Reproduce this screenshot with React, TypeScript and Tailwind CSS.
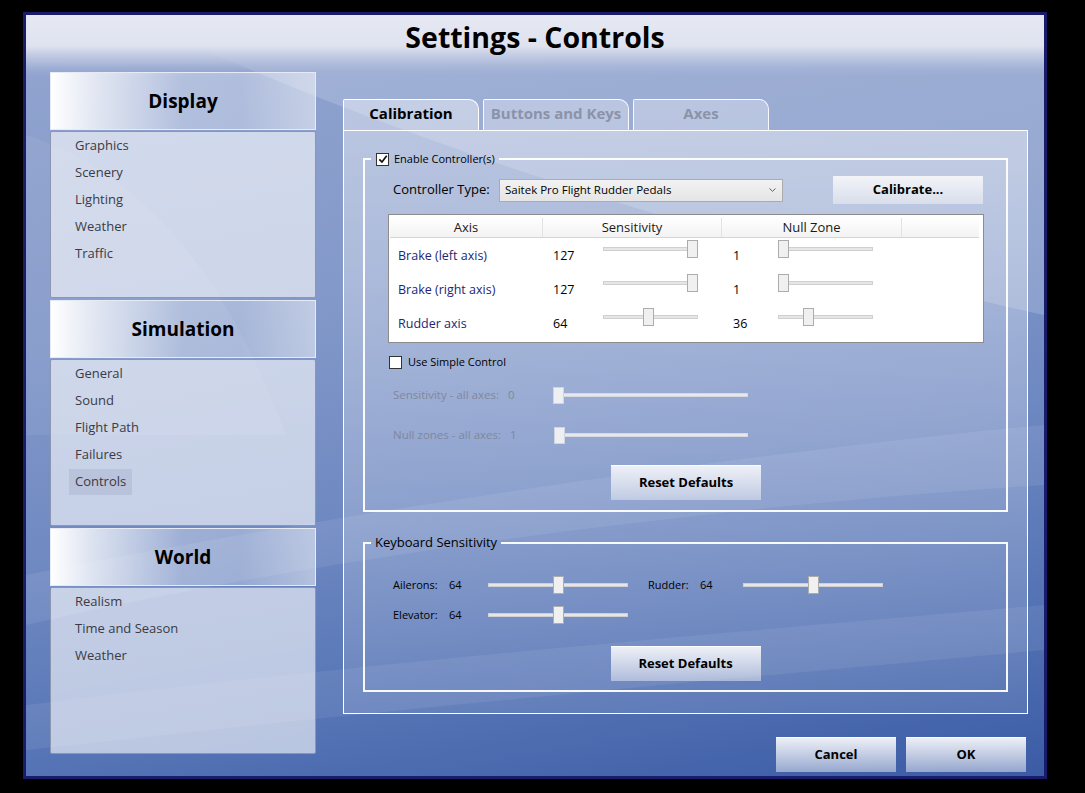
import React from "react";

type SliderProps = { w: string; h?: string; frac: number; disabled?: boolean };

function Slider({ w, h = "h-[18px]", frac, disabled }: SliderProps) {
  return (
    <div className={`relative shrink-0 ${w} ${h}`}>
      <div
        className={`absolute left-0 right-0 top-1/2 -translate-y-1/2 h-[4px] border ${
          disabled ? "bg-[#e6e8ec] border-[#d6d9e0]" : "bg-[#e6e6e6] border-[#d0d0d0]"
        }`}
      />
      <div
        className={`absolute top-0 bottom-0 w-[11px] border ${
          disabled ? "bg-[#eeeff2] border-[#d2d5dc]" : "bg-[#f0f0f0] border-[#acacac]"
        }`}
        style={{ left: `calc(${frac} * (100% - 11px))` }}
      />
    </div>
  );
}

function Section({ title, items, active }: { title: string; items: string[]; active?: string }) {
  return (
    <div className="flex flex-col">
      <div className="h-[58px] flex items-center justify-center border border-[#e6eaf4] bg-[linear-gradient(90deg,rgba(255,255,255,1)_0%,rgba(255,255,255,0.75)_16%,rgba(255,255,255,0.32)_50%,rgba(255,255,255,0.3)_72%,rgba(255,255,255,0.5)_100%)] text-[19px] font-bold text-black">
        {title}
      </div>
      <div className="mt-[1px] h-[167px] rounded-[2px] border border-[#8b96b3] bg-white/60">
        {items.map((it) => (
          <div key={it} className="h-[27px] flex items-center">
            <span
              className={`ml-[18px] px-[6px] h-[26px] flex items-center text-[13px] text-[#3a3a46] ${
                it === active ? "bg-[#aab4d0]/50" : ""
              }`}
            >
              {it}
            </span>
          </div>
        ))}
      </div>
    </div>
  );
}

function Btn({ label, w, h }: { label: string; w: string; h: string }) {
  return (
    <div
      className={`${w} ${h} flex items-center justify-center bg-gradient-to-b from-[#eff1f7] to-[#eceef5]/50 text-[13px] font-bold text-black shadow-[inset_0_1px_0_rgba(255,255,255,0.8)]`}
    >
      {label}
    </div>
  );
}

function CheckBox({ checked }: { checked?: boolean }) {
  return (
    <span className="w-[13px] h-[13px] border border-[#333333] bg-white flex items-center justify-center shrink-0">
      {checked && (
        <svg viewBox="0 0 10 10" className="w-[10px] h-[10px]">
          <path d="M1.3 5.3 L4 8 L8.7 1.8" stroke="#111" strokeWidth="1.7" fill="none" />
        </svg>
      )}
    </span>
  );
}

const rows = [
  { name: "Brake (left axis)", s: 127, sf: 1, n: 1, nf: 0 },
  { name: "Brake (right axis)", s: 127, sf: 1, n: 1, nf: 0 },
  { name: "Rudder axis", s: 64, sf: 0.48, n: 36, nf: 0.3 },
];

export default function App() {
  return (
    <div className="w-[1085px] h-[793px] bg-black pt-[12px] pl-[23px] font-['Open_Sans',sans-serif]">
      <div className="relative w-[1024px] h-[767px] border-[3px] border-[#1b1b6b] overflow-hidden bg-[linear-gradient(170deg,#93a5d0_0%,#8399c9_35%,#6e88c1_60%,#5372b4_82%,#3b5ba5_100%)]">
        <svg className="absolute inset-0 w-full h-full" viewBox="0 0 1018 761" preserveAspectRatio="none">
          <defs>
            <linearGradient id="top" x1="0" y1="0" x2="0" y2="1">
              <stop offset="0" stopColor="#e6e9f3" />
              <stop offset="0.5" stopColor="#dfe3ef" />
              <stop offset="0.75" stopColor="#b9c4df" stopOpacity="0.8" />
              <stop offset="1" stopColor="#9fb0d6" stopOpacity="0" />
            </linearGradient>
          </defs>
          <path d="M100 0 L1018 0 L1018 300 C 700 230 380 130 100 0 Z" fill="#ffffff" opacity="0.16" />
          <path d="M0 120 C 120 160 200 260 260 420 L 0 420 Z" fill="#ffffff" opacity="0.06" />
          <path d="M0 560 C 300 500 700 440 1018 410 L1018 470 C 700 490 300 540 0 610 Z" fill="#ffffff" opacity="0.08" />
          <path d="M0 690 C 400 640 800 610 1018 590 L1018 635 C 800 655 400 690 0 735 Z" fill="#ffffff" opacity="0.07" />
          <rect x="0" y="0" width="1018" height="62" fill="url(#top)" />
        </svg>

        <div className="relative flex flex-col h-full">
          <h1 className="h-[57px] text-center text-[28.5px] font-bold leading-[44px] text-black">
            Settings - Controls
          </h1>

          <div className="flex pl-[24px]">
            <aside className="w-[266px] flex flex-col gap-[2px]">
              <Section title="Display" items={["Graphics", "Scenery", "Lighting", "Weather", "Traffic"]} />
              <Section
                title="Simulation"
                items={["General", "Sound", "Flight Path", "Failures", "Controls"]}
                active="Controls"
              />
              <Section title="World" items={["Realism", "Time and Season", "Weather"]} />
            </aside>

            <main className="ml-[27px] w-[685px] pt-[27px] flex flex-col">
              <div className="flex gap-[4px] h-[31px] items-end">
                <div className="w-[136px] h-[31px] pb-[4px] border border-b-0 border-white rounded-tr-[10px] rounded-tl-[2px] bg-white/40 flex items-center justify-center text-[15px] font-bold text-black">
                  Calibration
                </div>
                <div className="w-[146px] h-[31px] pb-[4px] border border-b-0 border-white/90 rounded-tr-[10px] rounded-tl-[2px] bg-white/30 flex items-center justify-center text-[15px] font-bold text-[#8a93a9]">
                  Buttons and Keys
                </div>
                <div className="w-[136px] h-[31px] pb-[4px] border border-b-0 border-white/90 rounded-tr-[10px] rounded-tl-[2px] bg-white/30 flex items-center justify-center text-[15px] font-bold text-[#8a93a9]">
                  Axes
                </div>
              </div>

              <div className="h-[584px] border border-white bg-gradient-to-b from-white/40 to-white/10 px-[19px] pt-[20px]">
                <fieldset className="border-2 border-white/95">
                  <legend className="ml-[6px] px-[4px] h-[16px] flex items-center gap-[5px] text-[11px] text-black">
                    <span className="ml-[1px]">
                      <CheckBox checked />
                    </span>
                    Enable Controller(s)
                  </legend>
                  <div className="pl-[23px] pr-[22px] pt-[9px] pb-[10px] flex flex-col">
                    <div className="h-[28px] flex items-center justify-between">
                      <div className="flex items-center">
                        <span className="w-[111px] pl-[5px] text-[13px] text-black">Controller Type:</span>
                        <div className="w-[284px] h-[23px] border border-[#acacac] bg-gradient-to-b from-[#f2f2f2] to-[#e5e5e5] flex items-center justify-between pl-[5px] pr-[6px] text-[11.5px] text-black">
                          <span>Saitek Pro Flight Rudder Pedals</span>
                          <svg viewBox="0 0 7 4" className="w-[7px] h-[4px]">
                            <path d="M0.5 0.5 L3.5 3.3 L6.5 0.5" stroke="#606060" strokeWidth="1" fill="none" />
                          </svg>
                        </div>
                      </div>
                      <div className="w-[150px] h-[28px] mr-[1px] flex items-center justify-center bg-gradient-to-b from-[#f3f4f8] to-[#d8deeb] text-[13px] font-bold text-black">
                        Calibrate...
                      </div>
                    </div>

                    <div className="mt-[10px] h-[129px] border border-[#8c8c8c] bg-white p-[1px] pr-[4px]">
                      <div className="h-[22px] pt-[2px] flex border-b border-[#d6d6d6] bg-gradient-to-b from-white to-[#f3f3f3] text-[13px] text-[#1a1a1a]">
                        <div className="w-[153px] border-r border-[#e2e2e2] flex items-center justify-center">Axis</div>
                        <div className="w-[179px] border-r border-[#e2e2e2] flex items-center justify-center">Sensitivity</div>
                        <div className="w-[180px] border-r border-[#e2e2e2] flex items-center justify-center">Null Zone</div>
                        <div className="flex-1" />
                      </div>
                      {rows.map((r) => (
                        <div key={r.name} className="h-[34px] flex text-[12.5px]">
                          <div className="w-[153px] pl-[8px] pt-[2px] flex items-center text-[#1b2777]">{r.name}</div>
                          <div className="w-[179px] pl-[10px] flex">
                            <span className="w-[50px] pt-[2px] flex items-center text-black">{r.s}</span>
                            <div className="mt-[2px]">
                              <Slider w="w-[95px]" frac={r.sf} />
                            </div>
                          </div>
                          <div className="w-[180px] pl-[11px] flex">
                            <span className="w-[45px] pt-[2px] flex items-center text-black">{r.n}</span>
                            <div className="mt-[2px]">
                              <Slider w="w-[95px]" frac={r.nf} />
                            </div>
                          </div>
                        </div>
                      ))}
                    </div>

                    <div className="mt-[11px] h-[16px] flex items-center gap-[6px] pl-[1px] text-[11px] text-black">
                      <CheckBox />
                      Use Simple Control
                    </div>

                    <div className="mt-[16px] h-[18px] flex items-center text-[11.5px] text-[#80879b]">
                      <span className="w-[165px] pl-[5px]">Sensitivity - all axes:&nbsp;&nbsp; 0</span>
                      <Slider w="w-[195px]" h="h-[17px]" frac={0} disabled />
                    </div>
                    <div className="mt-[22px] h-[18px] flex items-center text-[11.5px] text-[#80879b]">
                      <span className="w-[166px] pl-[5px]">Null zones - all axes:&nbsp;&nbsp; 1</span>
                      <Slider w="w-[194px]" h="h-[17px]" frac={0} disabled />
                    </div>

                    <div className="mt-[21px] flex justify-center">
                      <Btn label="Reset Defaults" w="w-[150px]" h="h-[35px]" />
                    </div>
                  </div>
                </fieldset>

                <fieldset className="mt-[22px] border-2 border-white/95">
                  <legend className="ml-[6px] px-[4px] h-[18px] flex items-center text-[13px] text-black">
                    Keyboard Sensitivity
                  </legend>
                  <div className="pt-[24px] pb-[9px] flex flex-col">
                    <div className="h-[18px] flex items-center pl-[28px] text-[11px] text-black">
                      <span className="w-[56px]">Ailerons:</span>
                      <span className="w-[39px]">64</span>
                      <Slider w="w-[140px]" frac={0.5} />
                      <span className="ml-[20px] w-[52px]">Rudder:</span>
                      <span className="w-[43px]">64</span>
                      <Slider w="w-[140px]" frac={0.5} />
                    </div>
                    <div className="mt-[12px] h-[18px] flex items-center pl-[28px] text-[11px] text-black">
                      <span className="w-[56px]">Elevator:</span>
                      <span className="w-[39px]">64</span>
                      <Slider w="w-[140px]" frac={0.5} />
                    </div>
                    <div className="mt-[22px] flex justify-center">
                      <Btn label="Reset Defaults" w="w-[150px]" h="h-[35px]" />
                    </div>
                  </div>
                </fieldset>
              </div>

              <div className="mt-[23px] flex justify-end gap-[10px] pr-[2px]">
                <Btn label="Cancel" w="w-[120px]" h="h-[35px]" />
                <Btn label="OK" w="w-[120px]" h="h-[35px]" />
              </div>
            </main>
          </div>
        </div>
      </div>
    </div>
  );
}
